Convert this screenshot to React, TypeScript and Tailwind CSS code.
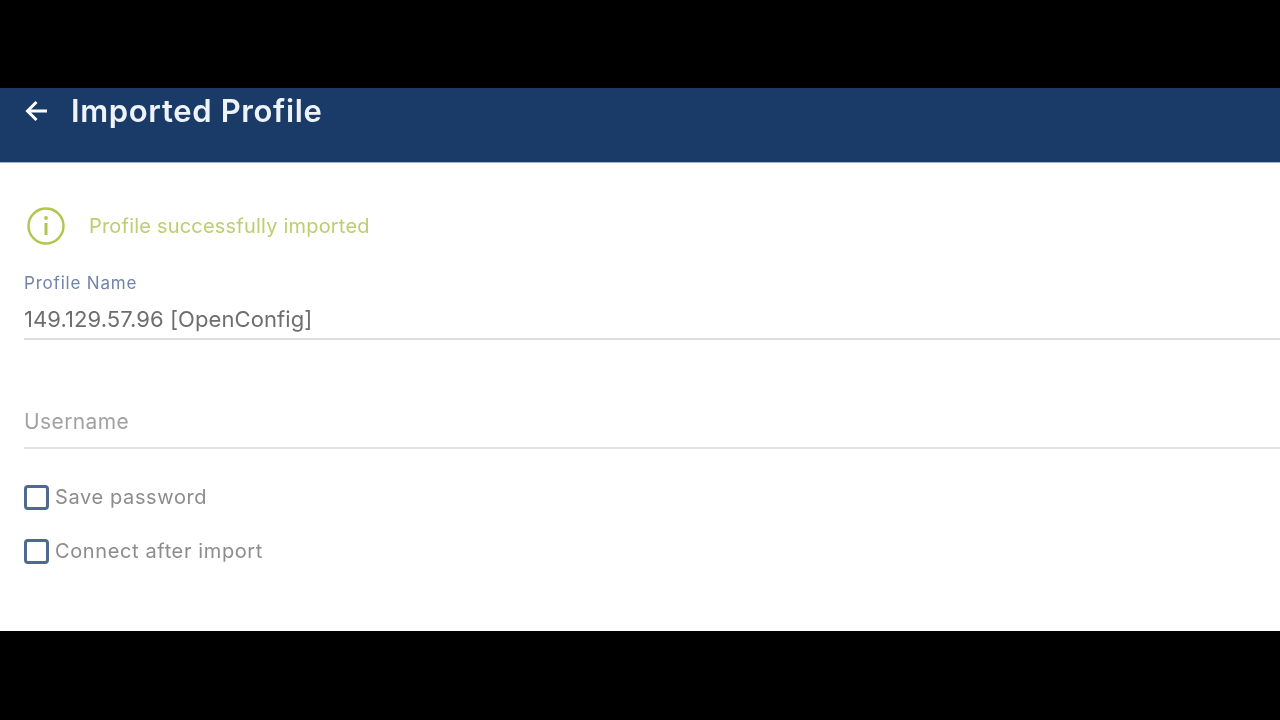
export default function App() {
  const font = { fontFamily: '"Inter", "Noto Sans", sans-serif' };
  return (
    <div className="h-[720px] w-[1280px] overflow-hidden bg-black flex flex-col" style={font}>
      <div className="h-[88px] shrink-0 bg-black" />
      <header className="h-[75px] shrink-0 bg-[#1a3a68] flex items-start pl-6 pt-[5px] border-b border-[#9fb2cc]">
        <svg width="26" height="26" viewBox="0 0 26 26" fill="none" stroke="#ffffff" strokeWidth="3" className="mt-[5px] [filter:blur(0.5px)]">
          <path d="M23 13H4M12.5 4L3.5 13l9 9" />
        </svg>
        <h1 className="ml-[21px] text-[31px] leading-[36px] font-semibold text-[#eef3f9] tracking-[0.66px] [filter:blur(0.6px)]">Imported Profile</h1>
      </header>
      <main className="h-[468px] shrink-0 bg-white pl-6 flex flex-col">
        <div className="flex items-center mt-[43px] h-[40px]">
          <svg width="40" height="40" viewBox="0 0 40 40" fill="none" className="ml-[2px] [filter:blur(0.5px)]">
            <circle cx="20" cy="20" r="17.5" stroke="#b0c650" strokeWidth="2.4" />
            <path d="M20 17v12" stroke="#b0c650" strokeWidth="3" />
            <circle cx="20" cy="12" r="1.9" fill="#b0c650" />
          </svg>
          <span className="ml-[23px] text-[20px] leading-[28px] text-[#bccf6e] tracking-[0.2px] [filter:blur(0.7px)]">Profile successfully imported</span>
        </div>
        <label className="mt-[26px] text-[17px] leading-[22px] text-[#7184ab] tracking-[0.8px] [filter:blur(0.7px)]">Profile Name</label>
        <div className="mt-[12px] h-[25px] text-[22px] leading-[26px] text-[#6e6e6e] tracking-[0.08px] [filter:blur(0.7px)]">149.129.57.96 [OpenConfig]</div>
        <div className="mt-[7px] h-[2px] bg-[#dedede]" />
        <div className="mt-[69px] h-[26px] text-[21px] leading-[26px] text-[#a2a2a2] tracking-[0.4px] [filter:blur(0.7px)]">Username</div>
        <div className="mt-[12px] h-[2px] bg-[#e2e2e2]" />
        <div className="flex items-center mt-[35px] h-[26px]">
          <span className="w-[25px] h-[25px] rounded-[4px] border-[3px] border-[#4f6a8e] bg-white [filter:blur(0.4px)]" />
          <span className="ml-[6px] text-[20px] leading-[26px] text-[#8c8c8c] tracking-[0.62px] [filter:blur(0.7px)]">Save password</span>
        </div>
        <div className="flex items-center mt-[28px] h-[26px]">
          <span className="w-[25px] h-[25px] rounded-[4px] border-[3px] border-[#4f6a8e] bg-white [filter:blur(0.4px)]" />
          <span className="ml-[6px] text-[20px] leading-[26px] text-[#8c8c8c] tracking-[0.62px] [filter:blur(0.7px)]">Connect after import</span>
        </div>
      </main>
      <div className="flex-1 bg-black" />
    </div>
  );
}
